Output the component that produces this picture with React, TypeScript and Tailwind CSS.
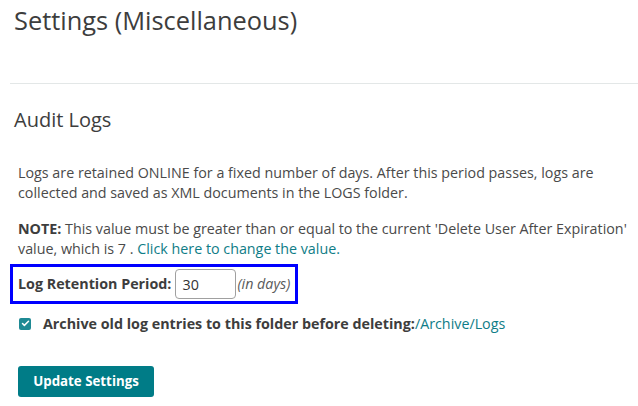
import { Check } from "lucide-react";

export default function App() {
  return (
    <div className="min-h-[406px] bg-white font-['Open_Sans',sans-serif] text-[#4a4a4a]">
      {/* Page header */}
      <div className="pl-[14px] pt-[2px]">
        <h1 className="text-[25.4px] leading-[36px] text-[#3d3d3d]">Settings (Miscellaneous)</h1>
      </div>
      <div className="ml-[10px] mt-[45px] border-t border-[#e3e7e7]" />

      {/* Audit logs section */}
      <div className="pl-[14px] pt-[22px]">
        <h2 className="text-[20px] leading-[28px] text-[#3d3d3d]">Audit Logs</h2>
      </div>

      <div className="pl-[18px] pr-[8px] pt-[29px] text-[14.3px] leading-[20px]">
        <p>
          Logs are retained ONLINE for a fixed number of days. After this period passes, logs are
          collected and saved as XML documents in the LOGS folder.
        </p>
        <p className="mt-[16px]">
          <b className="font-bold text-[#3d3d3d]">NOTE:</b> This value must be greater than or equal to
          the current 'Delete User After Expiration' value, which is 7 .{" "}
          <a href="#" className="text-[#0f7d87]">
            Click here to change the value.
          </a>
        </p>
      </div>

      {/* Retention period */}
      <div className="ml-[10px] mt-[5px] flex h-[40px] w-[288px] items-center border-[3px] border-[#0000ff] pl-[5px]">
        <label className="text-[14.3px] font-bold text-[#3d3d3d]">Log Retention Period:</label>
        <input
          defaultValue="30"
          className="ml-[4px] h-[30px] w-[61px] rounded-[4px] border border-[#a0a0a0] px-[6px] text-[14.3px] text-[#333] outline-none"
        />
        <span className="ml-[1px] text-[14.3px] italic text-[#5a5a5a]">(in days)</span>
      </div>

      <div className="mt-[9px] flex items-center pl-[19px] text-[14.3px]">
        <span className="flex h-[12px] w-[12px] items-center justify-center rounded-[2px] bg-[#1e8a94]">
          <Check className="h-[9px] w-[9px] text-white" strokeWidth={4} />
        </span>
        <span className="ml-[12px] font-bold text-[#3d3d3d]">
          Archive old log entries to this folder before deleting:
        </span>
        <span className="text-[#0f7d87]">/Archive/Logs</span>
      </div>

      <div className="pl-[18px] pt-[32px]">
        <button className="h-[31px] w-[136px] rounded-[3px] bg-[#007c87] text-[13.3px] font-bold text-white">
          Update Settings
        </button>
      </div>
    </div>
  );
}
